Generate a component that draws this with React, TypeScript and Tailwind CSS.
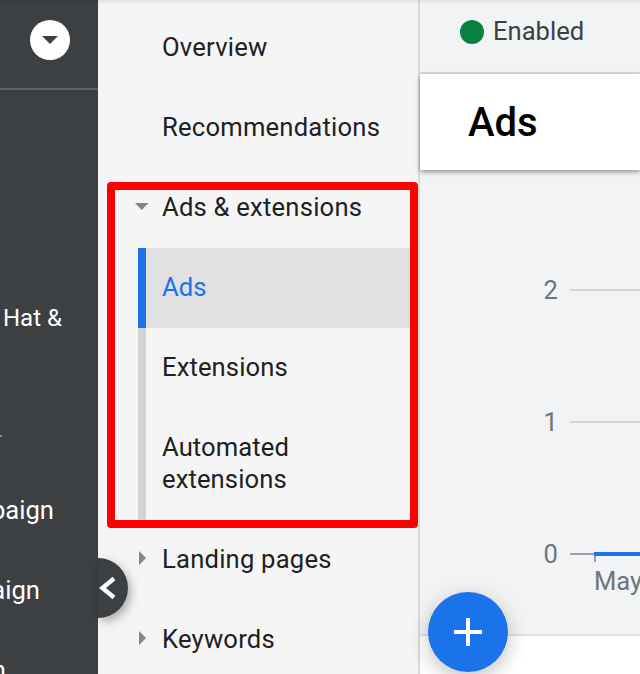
const Caret = ({ open }: { open?: boolean }) => (
  <svg width="16" height="16" viewBox="0 0 16 16" className="shrink-0">
    <path d={open ? 'M1 4h13.5l-6.75 7z' : 'M5 0v14l7-7z'} fill="#80868b" />
  </svg>
);

function NavRow({ label, caret }: { label: string; caret?: 'open' | 'closed' }) {
  return (
    <div className="flex h-20 items-center pl-[36px] text-[25.6px] tracking-[0.22px] text-[#202124]">
      <div className="flex w-[28px] items-center">
        {caret && <Caret open={caret === 'open'} />}
      </div>
      <span>{label}</span>
    </div>
  );
}

function GridRow({ value, base }: { value: string; base?: boolean }) {
  return (
    <div className="flex h-[132px] items-center text-[25.6px] text-[#70757a]">
      <span className="w-[140px] translate-y-px pr-[2px] text-right leading-none">{value}</span>
      <div className="ml-[10px] flex flex-1 items-center">
        {base ? (
          <>
            <div className="h-[2px] w-[24px] bg-[#9aa0a6]" />
            <div className="relative h-[4px] flex-1 bg-[#1a73e8]">
              <div className="absolute left-0 top-[4px] h-[6px] w-[2px] bg-[#9aa0a6]" />
              <span className="absolute left-0 top-[17px] leading-none">May</span>
            </div>
          </>
        ) : (
          <div className="h-[2px] flex-1 bg-[#d4d6d8]" />
        )}
      </div>
    </div>
  );
}

export default function App() {
  return (
    <div className="relative flex h-[674px] w-[640px] overflow-hidden bg-[#f1f3f4] font-['Roboto',sans-serif]">
      {/* dark account rail */}
      <aside className="flex w-[98px] shrink-0 flex-col overflow-hidden bg-[#3c4043] text-[25.6px] text-white">
        <div className="flex h-[90px] shrink-0 items-start justify-center border-b-2 border-[#5f6368] pl-[2px] pt-[20px]">
          <div className="flex h-10 w-10 items-center justify-center rounded-full bg-white">
            <svg width="18" height="10" viewBox="0 0 18 10">
              <path d="M1 1h16l-8 8z" fill="#3c4043" />
            </svg>
          </div>
        </div>
        <div className="mt-[210px] shrink-0 whitespace-nowrap pl-[3px] text-[24px] leading-[36px]">Hat &amp;</div>
        <div className="mt-[99px] h-[2px] w-[2px] shrink-0 bg-[#8a8c8e]" />
        <div className="mt-[55px] flex shrink-0 justify-end whitespace-nowrap pr-[44px] leading-[36px]">Campaign</div>
        <div className="mt-[44px] flex shrink-0 justify-end whitespace-nowrap pr-[58px] leading-[36px]">Campaign</div>
        <div className="mt-[44px] flex shrink-0 justify-end whitespace-nowrap pr-[92px] leading-[36px]">Campaign</div>
      </aside>

      {/* section nav */}
      <nav className="w-[322px] shrink-0 border-r-2 border-[#d8d9da] bg-[#f5f5f5] pt-[7px]">
        <NavRow label="Overview" />
        <NavRow label="Recommendations" />
        <NavRow label="Ads & extensions" caret="open" />
        <div className="-mb-px ml-[40px] mt-[1px] border-l-8 border-[#d3d3d3] text-[25.6px] tracking-[0.1px] text-[#202124]">
          <div className="-ml-2 flex h-20 items-center border-l-8 border-[#1a73e8] bg-[#e0e0e0] pb-[2px] pl-[17px] text-[#1a73e8]">
            <span className="-ml-px">Ads</span>
          </div>
          <div className="flex h-20 items-center pb-[2px] pl-[16px]">Extensions</div>
          <div className="flex h-[112px] items-center pb-[2px] pl-[16px] leading-[32px]">
            Automated
            <br />
            extensions
          </div>
        </div>
        <NavRow label="Landing pages" caret="closed" />
        <NavRow label="Keywords" caret="closed" />
      </nav>

      {/* main content */}
      <main className="flex min-w-0 flex-1 flex-col">
        <div className="flex h-[74px] shrink-0 items-start border-b-2 border-[#d8d9da] pl-[40px] pt-[20px]">
          <div className="h-6 w-6 rounded-full bg-[#0b8043]" />
          <span className="ml-[9px] -translate-y-px text-[25.6px] leading-6 text-[#3c4043]">Enabled</span>
        </div>
        <div className="flex h-[96px] shrink-0 items-center bg-white pl-[48px] pt-[2px] text-[40px] font-medium text-black shadow-[0_2px_5px_rgba(0,0,0,0.4)]">
          Ads
        </div>
        <div className="mt-[54px] flex-1">
          <GridRow value="2" />
          <GridRow value="1" />
          <GridRow value="0" base />
        </div>
        <div className="mt-auto h-[40px] shrink-0 rounded-tl border-t-2 border-[#e0e0e0] bg-white" />
      </main>

      {/* overlays */}
      <div className="absolute left-[107px] top-[182px] h-[346px] w-[311px] rounded-[4px] border-[8px] border-[#ff0000]" />
      <div className="absolute left-[98px] top-[558px] flex h-[60px] w-[30px] items-center rounded-r-full bg-[#3c4043] shadow-[3px_4px_10px_rgba(0,0,0,0.3)]">
        <svg width="30" height="60" viewBox="0 0 30 60" fill="none">
          <path d="M16 20.5 4.5 30 16 39.5" stroke="#fff" strokeWidth="4.4" />
        </svg>
      </div>
      <div className="absolute left-[428px] top-[592px] flex h-20 w-20 items-center justify-center rounded-full bg-[#1a73e8] shadow-[0_6px_20px_rgba(0,0,0,0.25)]">
        <svg width="28" height="28" viewBox="0 0 28 28">
          <path d="M12 0h4v12h12v4H16v12h-4V16H0v-4h12z" fill="#fff" />
        </svg>
      </div>
      <div className="absolute inset-x-0 top-0 h-[5px] bg-gradient-to-b from-[rgba(0,0,0,0.08)] to-transparent" />
    </div>
  );
}
